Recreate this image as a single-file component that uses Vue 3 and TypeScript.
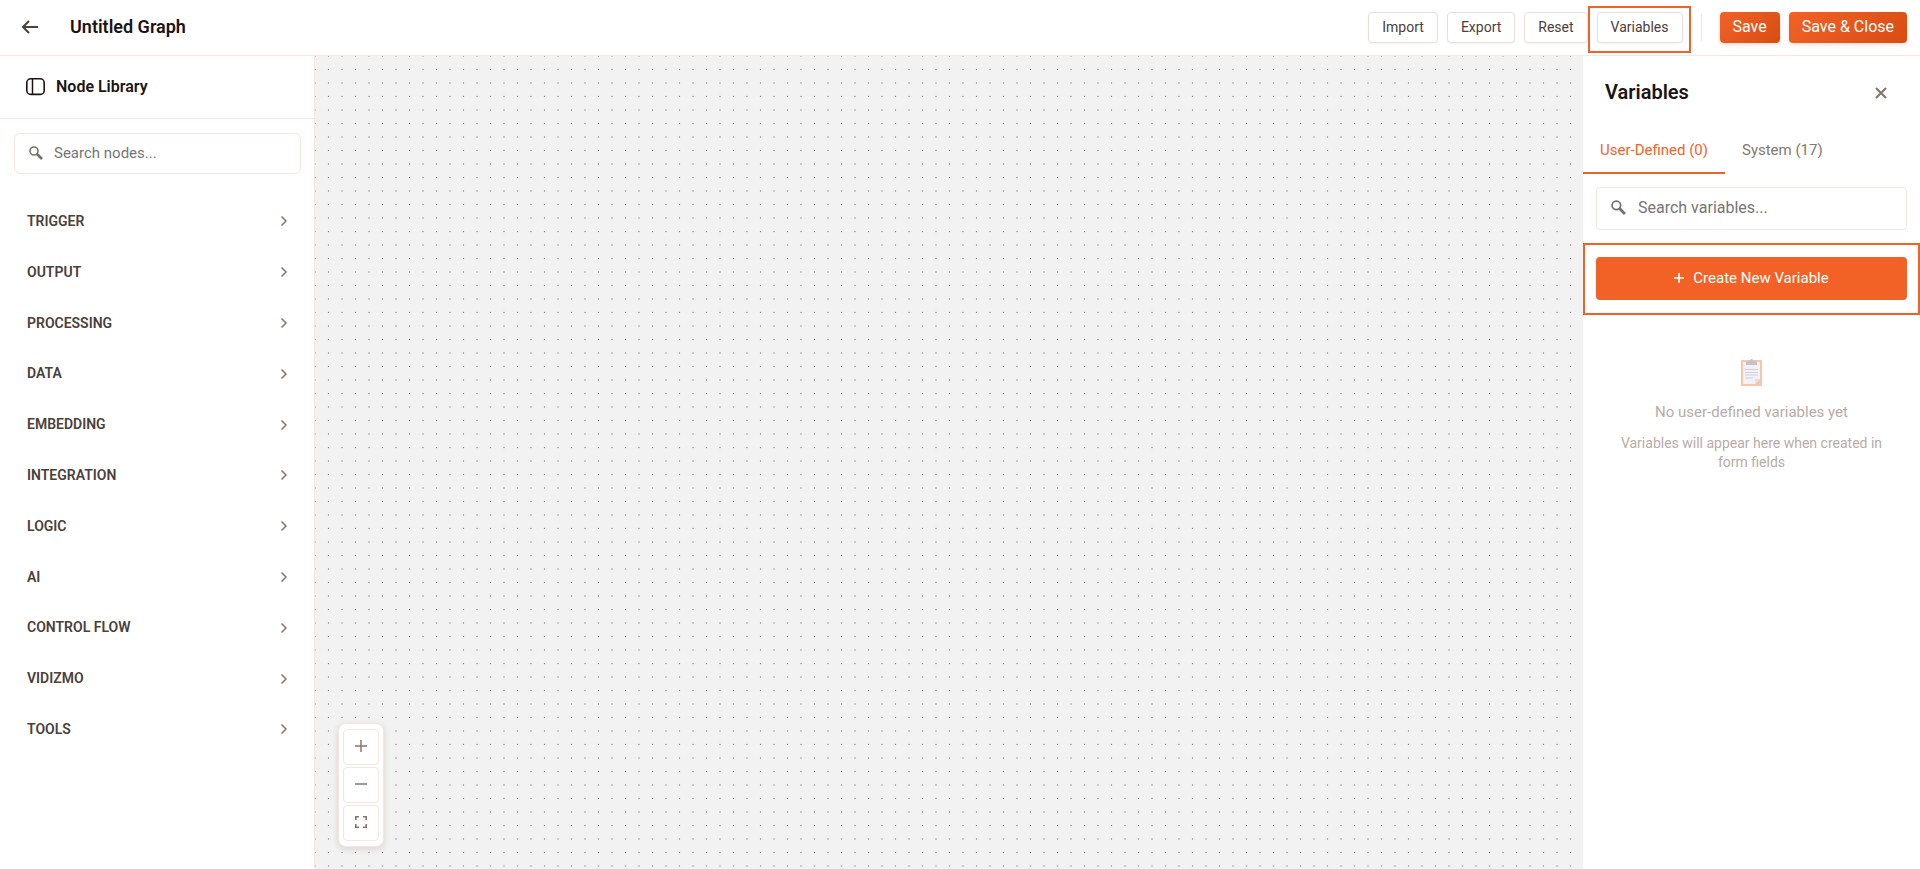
<script setup lang="ts">
import { ref } from 'vue'

const categories: string[] = [
  'TRIGGER',
  'OUTPUT',
  'PROCESSING',
  'DATA',
  'EMBEDDING',
  'INTEGRATION',
  'LOGIC',
  'AI',
  'CONTROL FLOW',
  'VIDIZMO',
  'TOOLS',
]

type Tab = 'user' | 'system'
const tabs: { id: Tab; label: string }[] = [
  { id: 'user', label: 'User-Defined (0)' },
  { id: 'system', label: 'System (17)' },
]
const activeTab = ref<Tab>('user')
const nodeQuery = ref('')
const variableQuery = ref('')
</script>

<template>
  <div class="app">
    <header class="topbar">
      <button class="icon-btn back" type="button" aria-label="Back">
        <svg width="18" height="16" viewBox="0 0 18 16" fill="none" stroke="currentColor" stroke-width="2">
          <path d="M17 7H2M8 1 2 7l6 6" />
        </svg>
      </button>
      <h1 class="title">Untitled Graph</h1>
      <div class="actions">
        <button class="btn" type="button">Import</button>
        <button class="btn" type="button">Export</button>
        <button class="btn" type="button">Reset</button>
        <div class="highlighted">
          <button class="btn" type="button">Variables</button>
        </div>
        <span class="divider"></span>
        <button class="btn primary" type="button">Save</button>
        <button class="btn primary" type="button">Save &amp; Close</button>
      </div>
    </header>

    <div class="workspace">
      <aside class="library">
        <div class="library-head">
          <svg width="19" height="18" viewBox="0 0 19 18" fill="none" stroke="currentColor" stroke-width="1.6">
            <rect x="0.8" y="0.8" width="17.4" height="15.6" rx="4" />
            <path d="M6.500 1v15.500" stroke-width="1.5" />
          </svg>
          <h2>Node Library</h2>
        </div>
        <label class="search">
          <svg width="14" height="14" viewBox="0 0 14 14" fill="none" stroke="currentColor">
            <circle cx="5" cy="5" r="4" stroke-width="1.6" />
            <path d="M7.500 7.500l5.500 5.500" stroke-width="2.6" />
          </svg>
          <input v-model="nodeQuery" type="text" placeholder="Search nodes..." aria-label="Search nodes" />
        </label>
        <nav class="categories" aria-label="Node categories">
          <button v-for="name in categories" :key="name" class="category" type="button">
            <span>{{ name }}</span>
            <svg width="8" height="10" viewBox="0 0 8 10" fill="none" stroke="currentColor" stroke-width="1.5">
              <path d="M1.5 0.5 6 5 1.5 9.5" />
            </svg>
          </button>
        </nav>
      </aside>

      <main class="canvas">
        <svg class="dots" aria-hidden="true">
          <defs>
            <pattern id="dot-grid" width="27" height="27" patternUnits="userSpaceOnUse">
              <g fill="#81818a">
                <circle cx="0" cy="0" r="0.7" />
                <circle cx="27" cy="0" r="0.7" />
                <circle cx="0" cy="27" r="0.7" />
                <circle cx="27" cy="27" r="0.7" />
                <circle cx="13.5" cy="0" r="0.7" />
                <circle cx="13.5" cy="27" r="0.7" />
                <circle cx="0" cy="13.5" r="0.7" />
                <circle cx="27" cy="13.5" r="0.7" />
                <circle cx="13.5" cy="13.5" r="0.7" />
              </g>
            </pattern>
          </defs>
          <rect width="100%" height="100%" fill="url(#dot-grid)" />
        </svg>
        <div class="zoom-controls">
          <button type="button" aria-label="Zoom in">
            <svg width="12" height="12" viewBox="0 0 12 12" fill="none" stroke="currentColor" stroke-width="1.5">
              <path d="M6 0v12M0 6h12" />
            </svg>
          </button>
          <button type="button" aria-label="Zoom out">
            <svg width="12" height="12" viewBox="0 0 12 12" fill="none" stroke="currentColor" stroke-width="1.5">
              <path d="M0 6h12" />
            </svg>
          </button>
          <button type="button" aria-label="Fit to view">
            <svg width="12" height="12" viewBox="0 0 12 12" fill="none" stroke="currentColor" stroke-width="1.6">
              <path d="M0.8 4V0.8H4M8 0.8h3.2V4M11.2 8v3.2H8M4 11.2H0.8V8" />
            </svg>
          </button>
        </div>
      </main>

      <aside class="variables">
        <div class="variables-head">
          <h2>Variables</h2>
          <button class="icon-btn close" type="button" aria-label="Close">
            <svg width="12" height="12" viewBox="0 0 12 12" fill="none" stroke="currentColor" stroke-width="2.2">
              <path d="M1 1l10 10M11 1 1 11" />
            </svg>
          </button>
        </div>
        <div class="tabs" role="tablist">
          <button
            v-for="tab in tabs"
            :key="tab.id"
            class="tab"
            :class="{ active: activeTab === tab.id }"
            type="button"
            role="tab"
            :aria-selected="activeTab === tab.id"
            @click="activeTab = tab.id"
          >
            {{ tab.label }}
          </button>
        </div>
        <label class="search large">
          <svg width="15" height="15" viewBox="0 0 14 14" fill="none" stroke="currentColor">
            <circle cx="5" cy="5" r="4" stroke-width="1.6" />
            <path d="M7.500 7.500l5.500 5.500" stroke-width="2.6" />
          </svg>
          <input v-model="variableQuery" type="text" placeholder="Search variables..." aria-label="Search variables" />
        </label>
        <div class="create-frame">
          <button class="create" type="button">
            <svg width="10" height="10" viewBox="0 0 10 10" fill="none" stroke="currentColor" stroke-width="1.6">
              <path d="M5 0v10M0 5h10" />
            </svg>
            <span>Create New Variable</span>
          </button>
        </div>
        <div class="empty">
          <svg class="clipboard" width="21" height="27" viewBox="0 0 21 27">
            <rect y="1" width="21" height="26" rx="1" fill="#e8905a" />
            <path d="M2 3h17v17l-5 5H2z" fill="#e8e2f2" />
            <path d="M14 25l5-5h-5z" fill="#c9bddb" />
            <path d="M5 6V3.5Q5 2 7 2h1.5Q9 0 10.5 0T12.500 2H14q2 0 2 1.500V6z" fill="#8b8590" />
            <path d="M4 10.500h13M4 13.500h13M4 16h13M4 19h8" stroke="#aaa3b5" stroke-width="1.200" />
          </svg>
          <p class="empty-title">No user-defined variables yet</p>
          <p class="empty-hint">Variables will appear here when created in form fields</p>
        </div>
      </aside>
    </div>
  </div>
</template>

<style>
body {
  margin: 0;
}
</style>

<style scoped>
.app {
  --accent: #f26227;
  --line: #f5e6e0;
  --ink: #1c1412;
  --body: #4a403c;
  --muted: #857770;
  display: flex;
  flex-direction: column;
  min-height: 100vh;
  font-family: Roboto, 'Liberation Sans', sans-serif;
  color: var(--ink);
  background: #fff;
}

.app *,
.app *::after {
  box-sizing: border-box;
}

button,
input {
  font: inherit;
}

button {
  cursor: pointer;
}

svg {
  flex: none;
  display: block;
}

h1,
h2,
p {
  margin: 0;
}

.topbar {
  display: flex;
  align-items: center;
  height: 56px;
  padding: 0 13px 0 14px;
  border-bottom: 1px solid var(--line);
}

.icon-btn {
  display: grid;
  place-items: center;
  width: 32px;
  height: 32px;
  padding: 0;
  border: 0;
  background: none;
  color: var(--body);
}

.title {
  margin-left: 24px;
  padding-bottom: 2px;
  font-size: 18px;
  font-weight: 600;
}

.actions {
  display: flex;
  align-items: center;
  gap: 9px;
  margin-left: auto;
}

.btn {
  height: 31px;
  padding: 0 13px 2px;
  border: 1px solid #ecdfd9;
  border-radius: 4px;
  background: #fff;
  color: var(--body);
  font-size: 14px;
  box-shadow: 0 1px 2px rgba(80, 40, 20, 0.05);
}

.highlighted {
  position: relative;
  display: flex;
}

.highlighted::after {
  content: '';
  position: absolute;
  inset: -6px -8px -10px -9px;
  border: 2px solid var(--accent);
  pointer-events: none;
}

.divider {
  width: 1px;
  height: 27px;
  margin: 0 9px;
  background: var(--line);
}

.btn.primary {
  padding: 0 13px 2px;
  border: 0;
  background: linear-gradient(135deg, #f26227, #d84c12);
  color: #fff;
  font-size: 16px;
  font-weight: 400;
  box-shadow: 0 2px 4px rgba(242, 98, 39, 0.2);
}

.workspace {
  flex: 1;
  display: grid;
  grid-template-columns: 315px minmax(0, 1fr) 337px;
}

.library {
  border-right: 1px solid var(--line);
}

.library-head {
  display: flex;
  align-items: center;
  gap: 11px;
  height: 63px;
  padding: 0 26px 1px;
  border-bottom: 1px solid var(--line);
}

.library-head h2 {
  font-size: 16px;
  font-weight: 600;
}

.search {
  display: flex;
  align-items: center;
  gap: 11px;
  height: 41px;
  margin: 14px 13px 0 14px;
  padding: 0 14px 2px;
  border: 1px solid var(--line);
  border-radius: 6px;
  color: #76716e;
  font-size: 15px;
}

.search input {
  flex: 1;
  min-width: 0;
  padding: 0;
  border: 0;
  outline: 0;
  background: none;
  color: var(--ink);
}

.search input::placeholder {
  color: #757575;
  opacity: 1;
}

.search.large {
  height: 43px;
  margin: 13px 13px 0;
  border-radius: 4px;
  gap: 12px;
  font-size: 16px;
}

.categories {
  display: flex;
  flex-direction: column;
  padding: 22px 14px;
}

.category {
  display: flex;
  align-items: center;
  justify-content: space-between;
  padding: 17px 12px 17px 13px;
  border: 0;
  background: none;
  color: var(--body);
  font-size: 14px;
  font-weight: 600;
  line-height: 1.2;
}

.category svg {
  color: var(--muted);
}

.canvas {
  position: relative;
  background: #f2f2f2;
}

.dots {
  position: absolute;
  inset: 0;
  width: 100%;
  height: 100%;
}

.zoom-controls {
  position: absolute;
  left: 23px;
  bottom: 22px;
  display: flex;
  flex-direction: column;
  gap: 2px;
  padding: 5px 4px;
  border: 1px solid var(--line);
  border-radius: 8px;
  background: #fff;
  box-shadow: 0 2px 6px rgba(80, 40, 20, 0.15);
}

.zoom-controls button {
  display: grid;
  place-items: center;
  width: 36px;
  height: 36px;
  padding: 0 0 2px;
  border: 1px solid var(--line);
  border-radius: 4px;
  background: #fff;
  color: var(--muted);
}

.variables-head {
  display: flex;
  align-items: center;
  justify-content: space-between;
  height: 74px;
  padding: 0 23px 0 22px;
}

.variables-head h2 {
  padding-bottom: 2px;
  font-size: 20px;
  font-weight: 600;
}

.close {
  color: var(--muted);
}

.tabs {
  display: flex;
}

.tab {
  height: 44px;
  padding: 0 17px 2px;
  border: 0;
  border-bottom: 2px solid transparent;
  background: none;
  color: var(--muted);
  font-size: 15px;
}

.tab.active {
  border-bottom-color: var(--accent);
  color: var(--accent);
}

.create-frame {
  margin-top: 13px;
  padding: 12px 11px 13px;
  border: 2px solid var(--accent);
}

.create {
  display: flex;
  align-items: center;
  justify-content: center;
  gap: 9px;
  width: 100%;
  height: 43px;
  padding: 0 0 2px;
  border: 0;
  border-radius: 4px;
  background: var(--accent);
  color: #fff;
  font-size: 15px;
}

.empty {
  display: flex;
  flex-direction: column;
  align-items: center;
  padding: 44px 36px;
  color: #b7aca8;
  text-align: center;
}

.clipboard {
  opacity: 0.5;
}

.empty-title {
  margin-top: 16px;
  font-size: 15px;
  line-height: 20px;
}

.empty-hint {
  margin-top: 12px;
  font-size: 14px;
  line-height: 19px;
}
</style>
